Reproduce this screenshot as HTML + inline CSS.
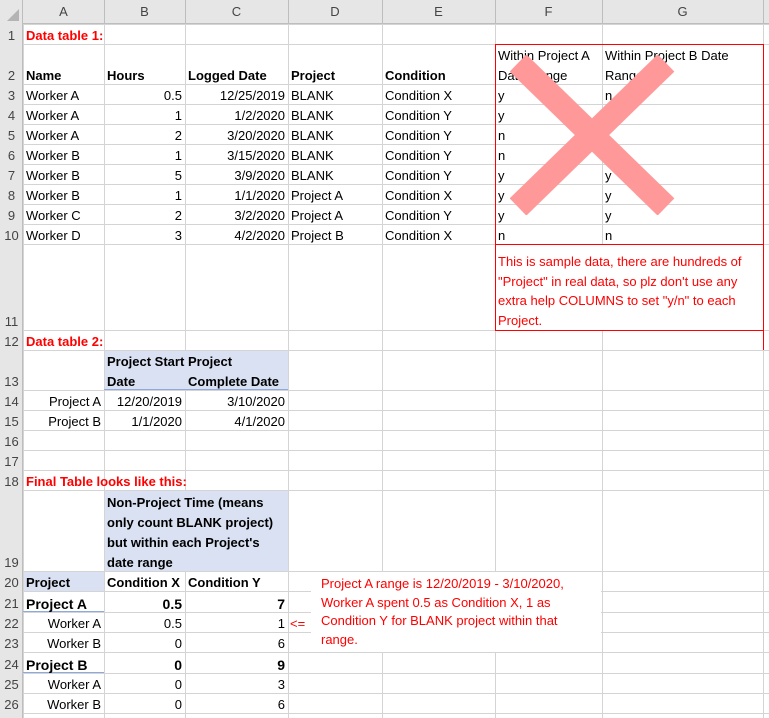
<!DOCTYPE html>
<html><head><meta charset="utf-8"><style>
body{margin:0;width:769px;height:718px;overflow:hidden;background:#fff;font-family:"Liberation Sans",Arial,sans-serif;font-size:13px;color:#000;position:relative}
div{position:absolute;box-sizing:border-box}
.v{top:0;width:1px;height:718px;background:#d4d4d4}
.h{left:0;height:1px;width:769px;background:#d4d4d4}
.t{height:20px;line-height:20px;white-space:nowrap;padding:0 3px;margin-top:2px}
.r{text-align:right}
.n{left:0;width:23px;text-align:center;color:#444;height:20px;line-height:20px;padding:0;margin-top:2px}
.ch{top:0;height:24px;line-height:24px;text-align:center;color:#444}
.b{font-weight:bold}
.red{color:#f00}
.f{background:#d9e1f2}
</style></head><body>
<div class="f" style="left:104px;top:350px;width:184px;height:40px"></div>
<div class="f" style="left:104px;top:490px;width:184px;height:81px"></div>
<div class="f" style="left:23px;top:571px;width:81px;height:20px"></div>

<div class="v" style="left:23px"></div><div class="v" style="left:104px"></div><div class="v" style="left:185px"></div><div class="v" style="left:288px"></div><div class="v" style="left:382px"></div><div class="v" style="left:495px"></div><div class="v" style="left:602px"></div><div class="v" style="left:763px"></div>
<div class="h" style="top:24px"></div><div class="h" style="top:44px"></div><div class="h" style="top:84px"></div><div class="h" style="top:104px"></div><div class="h" style="top:124px"></div><div class="h" style="top:144px"></div><div class="h" style="top:164px"></div><div class="h" style="top:184px"></div><div class="h" style="top:204px"></div><div class="h" style="top:224px"></div><div class="h" style="top:244px"></div><div class="h" style="top:330px"></div><div class="h" style="top:350px"></div><div class="h" style="top:390px"></div><div class="h" style="top:410px"></div><div class="h" style="top:430px"></div><div class="h" style="top:450px"></div><div class="h" style="top:470px"></div><div class="h" style="top:490px"></div><div class="h" style="top:571px"></div><div class="h" style="top:591px"></div><div class="h" style="top:612px"></div><div class="h" style="top:632px"></div><div class="h" style="top:652px"></div><div class="h" style="top:673px"></div><div class="h" style="top:693px"></div><div class="h" style="top:713px"></div>

<div class="f" style="left:105px;top:351px;width:183px;height:39px"></div>
<div class="f" style="left:105px;top:491px;width:183px;height:80px"></div>
<div class="f" style="left:24px;top:572px;width:80px;height:19px"></div>
<div style="left:104px;top:389px;width:184px;height:1px;background:#8ea9db"></div>
<div style="left:23px;top:611px;width:81px;height:1px;background:#8ea9db"></div>
<div style="left:23px;top:672px;width:81px;height:1px;background:#8ea9db"></div>

<div style="left:0;top:0;width:769px;height:24px;background:#e6e6e6;border-bottom:1px solid #bdbdbd"></div>
<div style="left:0;top:0;width:23px;height:718px;background:#e6e6e6;border-right:1px solid #bdbdbd"></div>
<svg style="position:absolute;left:6px;top:8px" width="14" height="14"><polygon points="13,1 13,13 1,13" fill="#b4b4b4"/></svg>
<div class="ch" style="left:23px;width:81px">A</div><div class="ch" style="left:104px;width:81px">B</div><div class="ch" style="left:185px;width:103px">C</div><div class="ch" style="left:288px;width:94px">D</div><div class="ch" style="left:382px;width:113px">E</div><div class="ch" style="left:495px;width:107px">F</div><div class="ch" style="left:602px;width:161px">G</div>
<div style="left:104px;top:0;width:1px;height:24px;background:#bdbdbd"></div><div style="left:185px;top:0;width:1px;height:24px;background:#bdbdbd"></div><div style="left:288px;top:0;width:1px;height:24px;background:#bdbdbd"></div><div style="left:382px;top:0;width:1px;height:24px;background:#bdbdbd"></div><div style="left:495px;top:0;width:1px;height:24px;background:#bdbdbd"></div><div style="left:602px;top:0;width:1px;height:24px;background:#bdbdbd"></div><div style="left:763px;top:0;width:1px;height:24px;background:#bdbdbd"></div>

<div class="n" style="top:24px">1</div><div class="n" style="top:64px">2</div><div class="n" style="top:84px">3</div><div class="n" style="top:104px">4</div><div class="n" style="top:124px">5</div><div class="n" style="top:144px">6</div><div class="n" style="top:164px">7</div><div class="n" style="top:184px">8</div><div class="n" style="top:204px">9</div><div class="n" style="top:224px">10</div><div class="n" style="top:310px">11</div><div class="n" style="top:330px">12</div><div class="n" style="top:370px">13</div><div class="n" style="top:390px">14</div><div class="n" style="top:410px">15</div><div class="n" style="top:430px">16</div><div class="n" style="top:450px">17</div><div class="n" style="top:470px">18</div><div class="n" style="top:551px">19</div><div class="n" style="top:571px">20</div><div class="n" style="top:592px">21</div><div class="n" style="top:612px">22</div><div class="n" style="top:632px">23</div><div class="n" style="top:653px">24</div><div class="n" style="top:673px">25</div><div class="n" style="top:693px">26</div>

<div class="t b red" style="left:23px;top:24px">Data table 1:</div>
<div class="t b" style="left:23px;top:64px">Name</div><div class="t b" style="left:104px;top:64px">Hours</div><div class="t b" style="left:185px;top:64px">Logged Date</div><div class="t b" style="left:288px;top:64px">Project</div><div class="t b" style="left:382px;top:64px">Condition</div>
<div class="t" style="left:495px;top:44px">Within Project A</div><div class="t" style="left:495px;top:64px">Date Range</div>
<div class="t" style="left:602px;top:44px">Within Project B Date</div><div class="t" style="left:602px;top:64px">Range</div>

<div class="t" style="left:23px;top:84px">Worker A</div><div class="t r" style="left:104px;width:81px;top:84px">0.5</div><div class="t r" style="left:185px;width:103px;top:84px">12/25/2019</div><div class="t" style="left:288px;top:84px">BLANK</div><div class="t" style="left:382px;top:84px">Condition X</div><div class="t" style="left:495px;top:84px">y</div><div class="t" style="left:602px;top:84px">n</div>
<div class="t" style="left:23px;top:104px">Worker A</div><div class="t r" style="left:104px;width:81px;top:104px">1</div><div class="t r" style="left:185px;width:103px;top:104px">1/2/2020</div><div class="t" style="left:288px;top:104px">BLANK</div><div class="t" style="left:382px;top:104px">Condition Y</div><div class="t" style="left:495px;top:104px">y</div>
<div class="t" style="left:23px;top:124px">Worker A</div><div class="t r" style="left:104px;width:81px;top:124px">2</div><div class="t r" style="left:185px;width:103px;top:124px">3/20/2020</div><div class="t" style="left:288px;top:124px">BLANK</div><div class="t" style="left:382px;top:124px">Condition Y</div><div class="t" style="left:495px;top:124px">n</div>
<div class="t" style="left:23px;top:144px">Worker B</div><div class="t r" style="left:104px;width:81px;top:144px">1</div><div class="t r" style="left:185px;width:103px;top:144px">3/15/2020</div><div class="t" style="left:288px;top:144px">BLANK</div><div class="t" style="left:382px;top:144px">Condition Y</div><div class="t" style="left:495px;top:144px">n</div>
<div class="t" style="left:23px;top:164px">Worker B</div><div class="t r" style="left:104px;width:81px;top:164px">5</div><div class="t r" style="left:185px;width:103px;top:164px">3/9/2020</div><div class="t" style="left:288px;top:164px">BLANK</div><div class="t" style="left:382px;top:164px">Condition Y</div><div class="t" style="left:495px;top:164px">y</div><div class="t" style="left:602px;top:164px">y</div>
<div class="t" style="left:23px;top:184px">Worker B</div><div class="t r" style="left:104px;width:81px;top:184px">1</div><div class="t r" style="left:185px;width:103px;top:184px">1/1/2020</div><div class="t" style="left:288px;top:184px">Project A</div><div class="t" style="left:382px;top:184px">Condition X</div><div class="t" style="left:495px;top:184px">y</div><div class="t" style="left:602px;top:184px">y</div>
<div class="t" style="left:23px;top:204px">Worker C</div><div class="t r" style="left:104px;width:81px;top:204px">2</div><div class="t r" style="left:185px;width:103px;top:204px">3/2/2020</div><div class="t" style="left:288px;top:204px">Project A</div><div class="t" style="left:382px;top:204px">Condition Y</div><div class="t" style="left:495px;top:204px">y</div><div class="t" style="left:602px;top:204px">y</div>
<div class="t" style="left:23px;top:224px">Worker D</div><div class="t r" style="left:104px;width:81px;top:224px">3</div><div class="t r" style="left:185px;width:103px;top:224px">4/2/2020</div><div class="t" style="left:288px;top:224px">Project B</div><div class="t" style="left:382px;top:224px">Condition X</div><div class="t" style="left:495px;top:224px">n</div><div class="t" style="left:602px;top:224px">n</div>

<div style="left:495px;top:44px;width:269px;height:287px;border:1px solid #f00;border-bottom:none"></div>
<div style="left:495px;top:244px;width:269px;height:87px;border:1px solid #f00;background:#fff"></div>
<div style="left:763px;top:330px;width:1px;height:20px;background:#f00"></div>
<div class="red" style="left:498px;top:252px;width:265px;line-height:19.5px;font-size:13px">This is sample data, there are hundreds of "Project" in real data, so plz don't use any extra help COLUMNS to set "y/n" to each Project.</div>
<svg style="position:absolute;left:510px;top:55px" width="165" height="160"><g stroke="#ff9999" stroke-width="24"><line x1="8" y1="8" x2="156" y2="152"/><line x1="156" y1="8" x2="8" y2="152"/></g></svg>

<div class="t b red" style="left:23px;top:330px">Data table 2:</div>
<div class="t b" style="left:104px;top:350px">Project Start</div><div class="t b" style="left:104px;top:370px">Date</div>
<div class="t b" style="left:185px;top:350px">Project</div><div class="t b" style="left:185px;top:370px">Complete Date</div>
<div class="t r" style="left:23px;width:81px;top:390px">Project A</div><div class="t r" style="left:104px;width:81px;top:390px">12/20/2019</div><div class="t r" style="left:185px;width:103px;top:390px">3/10/2020</div>
<div class="t r" style="left:23px;width:81px;top:410px">Project B</div><div class="t r" style="left:104px;width:81px;top:410px">1/1/2020</div><div class="t r" style="left:185px;width:103px;top:410px">4/1/2020</div>

<div class="t b red" style="left:23px;top:470px">Final Table looks like this:</div>
<div class="t b" style="left:104px;top:491px">Non-Project Time (means</div>
<div class="t b" style="left:104px;top:511px">only count BLANK project)</div>
<div class="t b" style="left:104px;top:531px">but within each Project's</div>
<div class="t b" style="left:104px;top:551px">date range</div>
<div class="t b" style="left:23px;top:571px">Project</div><div class="t b" style="left:104px;top:571px">Condition X</div><div class="t b" style="left:185px;top:571px">Condition Y</div>
<div class="t b" style="left:23px;top:592px;font-size:14px">Project A</div><div class="t r b" style="left:104px;width:81px;top:592px;font-size:14px">0.5</div><div class="t r b" style="left:185px;width:103px;top:592px;font-size:14px">7</div>
<div class="t r" style="left:23px;width:81px;top:612px">Worker A</div><div class="t r" style="left:104px;width:81px;top:612px">0.5</div><div class="t r" style="left:185px;width:103px;top:612px">1</div>
<div class="t red" style="left:288px;top:612px;padding:0 2px">&lt;=</div>
<div class="t r" style="left:23px;width:81px;top:632px">Worker B</div><div class="t r" style="left:104px;width:81px;top:632px">0</div><div class="t r" style="left:185px;width:103px;top:632px">6</div>
<div class="t b" style="left:23px;top:653px;font-size:14px">Project B</div><div class="t r b" style="left:104px;width:81px;top:653px;font-size:14px">0</div><div class="t r b" style="left:185px;width:103px;top:653px;font-size:14px">9</div>
<div class="t r" style="left:23px;width:81px;top:673px">Worker A</div><div class="t r" style="left:104px;width:81px;top:673px">0</div><div class="t r" style="left:185px;width:103px;top:673px">3</div>
<div class="t r" style="left:23px;width:81px;top:693px">Worker B</div><div class="t r" style="left:104px;width:81px;top:693px">0</div><div class="t r" style="left:185px;width:103px;top:693px">6</div>

<div style="left:311px;top:572px;width:290px;height:80px;background:#fff"></div>
<div class="red" style="left:321px;top:575px;width:262px;line-height:18.5px">Project A range is 12/20/2019 - 3/10/2020, Worker A spent 0.5 as Condition X, 1 as Condition Y for BLANK project within that range.</div>
</body></html>
